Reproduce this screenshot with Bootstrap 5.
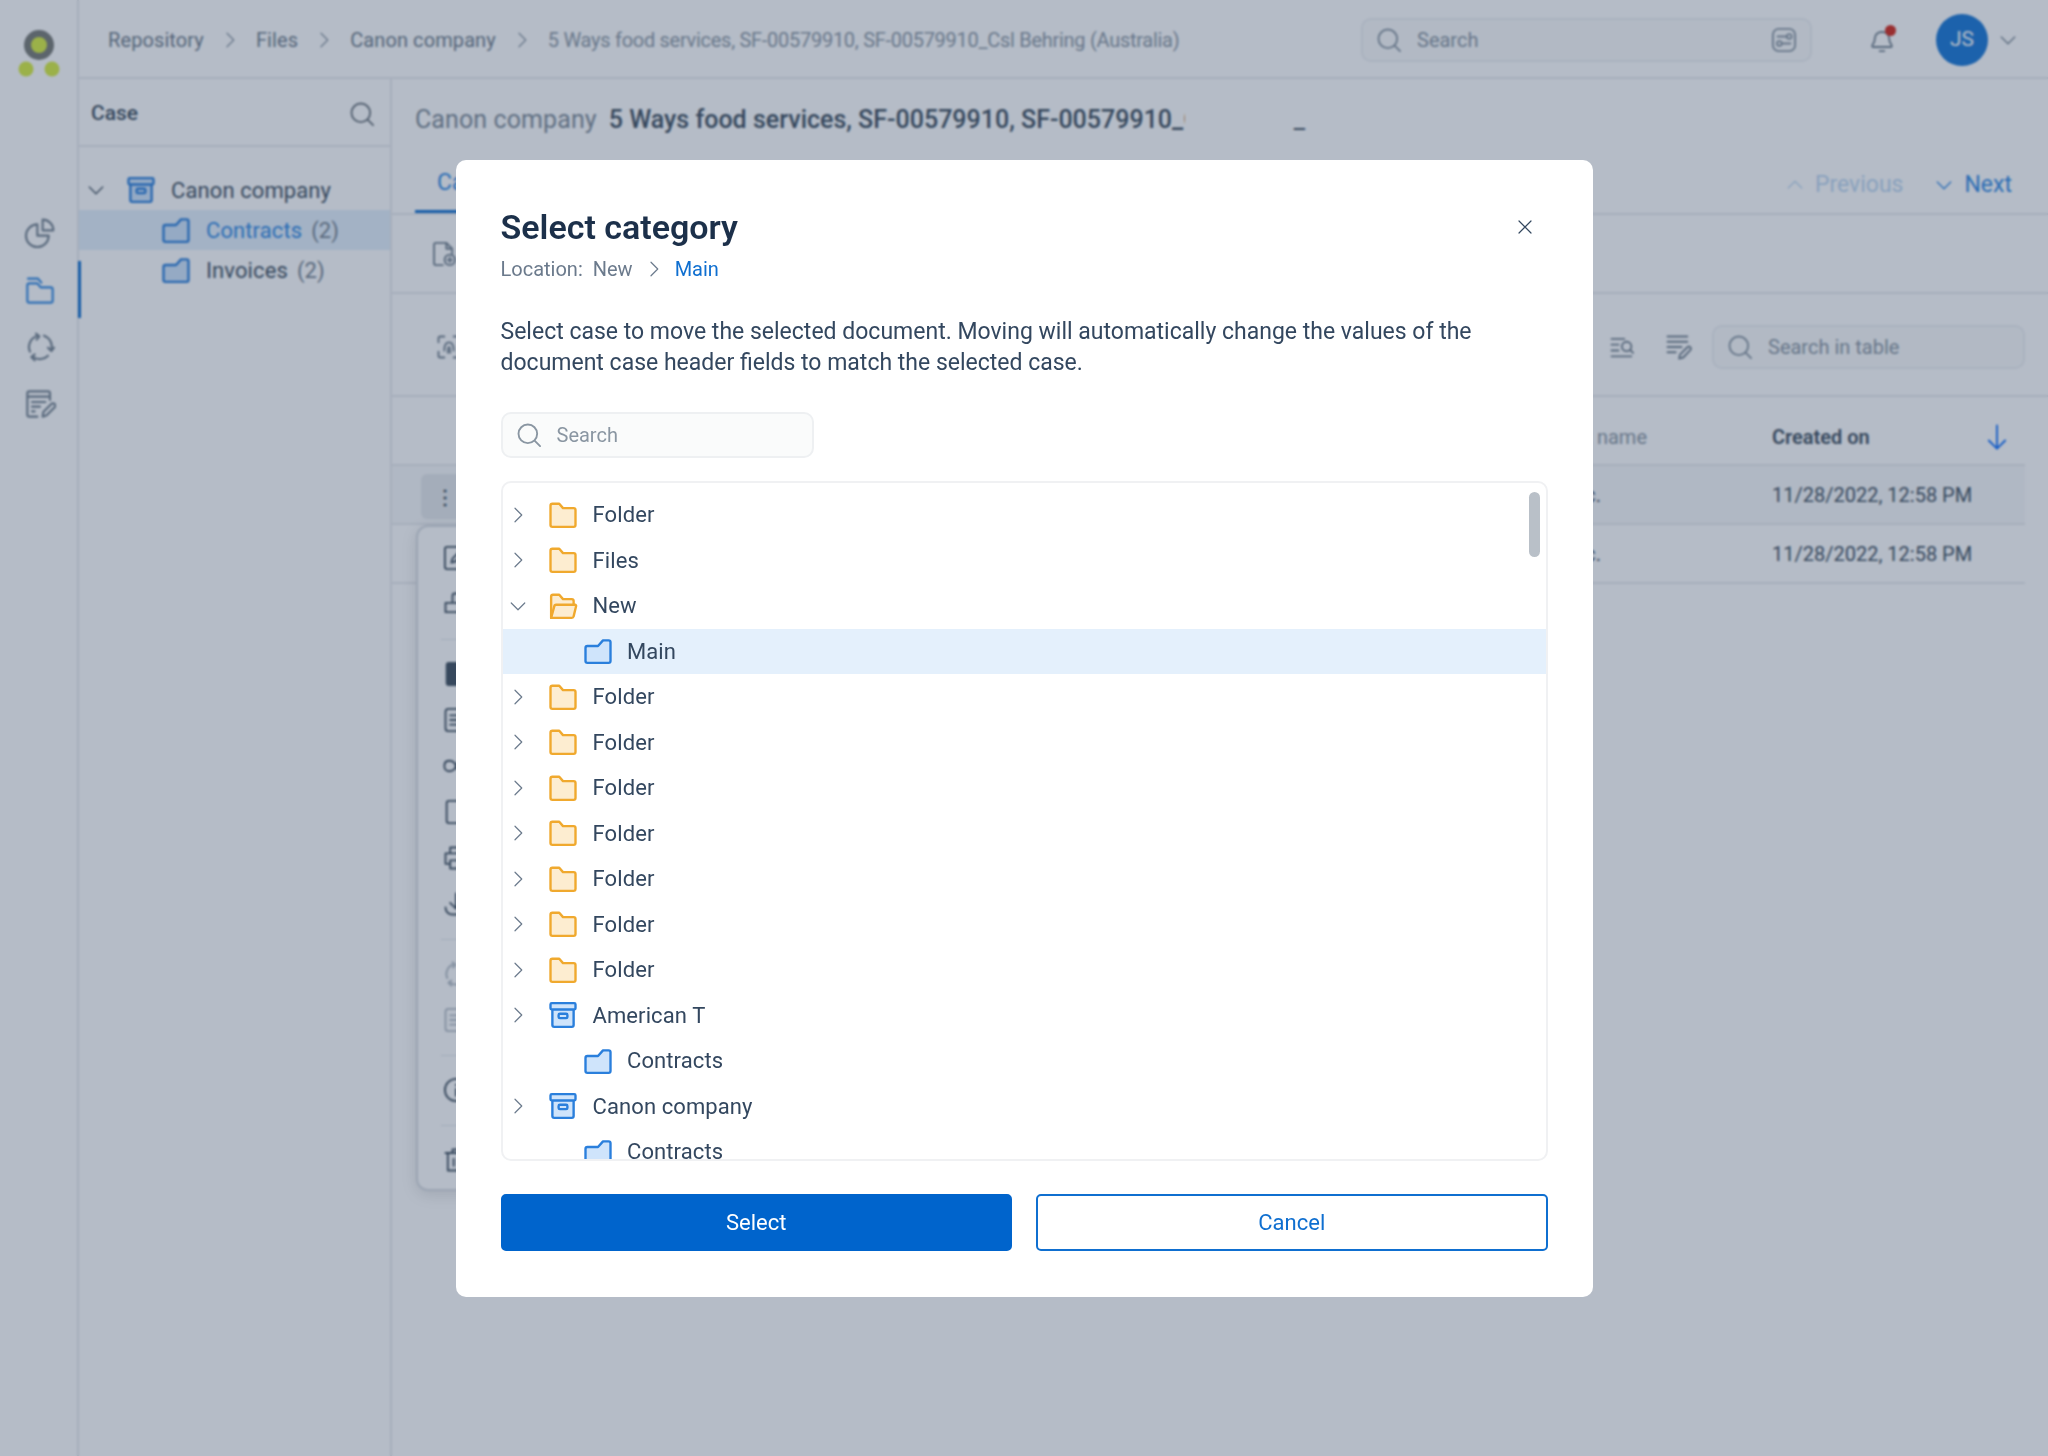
<!DOCTYPE html>
<html lang="en">
<head>
    <meta charset="UTF-8">
    <title>Select category</title>
    <link href="https://cdn.jsdelivr.net/npm/bootstrap@5.3.0/dist/css/bootstrap.min.css" rel="stylesheet">
    <style>
        html, body { height: 100%; overflow: hidden; }
        body { font-family: Roboto, "Liberation Sans", sans-serif; font-size: 20px; color: #40505f; background: #fff; }
        .ico { width: 28px; height: 28px; fill: none; stroke: currentColor; stroke-width: 1.6; stroke-linecap: round; stroke-linejoin: round; flex: none; }
        .ico-sm { width: 18px; height: 18px; }
        .shell { height: 1456px; }
        .rail { width: 79px; flex: none; border-right: 2px solid #e9ebee; color: #74828f; }
        .rail .ico { width: 32px; height: 32px; }
        .rail-logo { height: 79px; padding-top: 27px; }
        .rail-list { margin-top: 125px; }
        .rail-item { height: 57px; width: 79px; position: relative; }
        .rail-item.on { color: #2f88e3; }
        .rail-item.on::after { content: ""; position: absolute; right: -2px; top: 0; bottom: 0; width: 3px; background: #0f6fd0; }
        .page-col { min-width: 0; }
        .topbar { height: 79px; border-bottom: 2px solid #e9ebee; padding: 2px 0 0 29px; }
        .crumbs { font-size: 20px; color: #6f7d8b; gap: 17px; letter-spacing: .1px; }
        .crumbs .ico-sm { color: #8a96a2; }
        .crumbs .faded { color: #8d99a5; letter-spacing: -.28px; }
        .field { background: #fafbfb; border: 2px solid #eef0f2; border-radius: 10px; color: #8a96a2; gap: 14px; }
        .top-field { width: 451px; height: 44px; padding: 0 12px; margin-right: 56px; flex: none; }
        .bell { color: #74828f; position: relative; margin-right: 40px; }
        .bell i { position: absolute; top: -1px; right: 0; width: 11px; height: 11px; border-radius: 50%; background: #d5281a; }
        .avatar { width: 52px; height: 52px; border-radius: 50%; background: #1877d6; color: #fff; font-size: 21px; flex: none; }
        .top-caret { margin: 0 31px 0 11px; color: #74828f; }
        .side { width: 313px; flex: none; border-right: 2px solid #e9ebee; }
        .side-head { height: 68px; border-bottom: 2px solid #e9ebee; padding: 3px 14px 0 12px; font-size: 21px; font-weight: 500; }
        .side-tree { padding-top: 23px; font-size: 22px; letter-spacing: .1px; }
        .side-row { height: 40px; }
        .side-row .ico:not(.ico-sm) { width: 30px; height: 30px; margin-right: 15px; stroke-width: 1.9; }
        .side-row .ico-sm { margin: 0 21px 0 8px; }
        .side-row.leaf { padding-left: 82px; }
        .side-row.on { background: #e4f0fc; color: #2f88e3; }
        .side-row .cnt { color: #74828f; margin-left: 9px; }
        .main-col { min-width: 0; }
        .main-head { height: 68px; padding: 14px 0 0 23px; font-size: 25px; }
        .main-head .co { color: #7e8b97; margin-right: 12px; letter-spacing: .1px; }
        .main-head .doc { width: 576px; overflow: hidden; white-space: nowrap; font-weight: 500; }
        .main-head .tail { margin-left: 109px; }
        .tabs-row { height: 68px; border-bottom: 2px solid #e9ebee; padding: 0 36px 0 23px; font-size: 23px; }
        .tab-on { color: #2f88e3; height: 100%; border-bottom: 3px solid #0f6fd0; width: 100px; padding: 10px 0 0 22px; }
        .pager { color: #2f88e3; padding-top: 10px; gap: 11px; }
        .pager .off { color: #bcd6f0; }
        .pager span.off { margin-right: 21px; }
        .tool-a { height: 79px; border-bottom: 2px solid #e9ebee; padding-left: 38px; color: #74828f; }
        .tool-b { height: 103px; border-bottom: 2px solid #e9ebee; padding: 4px 23px 0 43px; color: #74828f; }
        .tool-list { margin: 0 20px 0 28px; }
        .table-field { width: 313px; height: 44px; padding: 0 12px; flex: none; }
        .grid-head, .grid-row { padding-right: 14px; margin-right: 23px; }
        .grid-head { height: 69px; padding-top: 12px; border-bottom: 2px solid #e9ebee; color: #8a96a2; font-size: 20px; }
        .grid-row { height: 59px; border-bottom: 2px solid #e9ebee; font-size: 20px; }
        .grid-row.on { background: #f8f9fa; }
        .cell-name { width: 1209px; text-align: right; flex: none; }
        .cell-date { margin-left: 171px; width: 211px; flex: none; white-space: nowrap; }
        .grid-head .cell-name { width: 1255px; }
        .grid-head .cell-date { margin-left: 125px; font-weight: 600; color: #40505f; }
        .kebab { position: absolute; left: 421px; top: 474px; width: 60px; height: 45px; background: #e6e9ec; border-radius: 6px; font-weight: 700; padding-left: 14px; }
        .row-menu { position: absolute; left: 416px; top: 525px; width: 300px; height: 666px; background: #fff; border: 2px solid #d8dce1; border-radius: 12px; box-shadow: 0 4px 16px rgba(0,0,0,.12); padding: 13px 0 0 24px; color: #40505f; }
        .row-menu .ico { height: 36px; display: block; }
        .row-menu .ico + .ico { margin-top: 10px; }
        .row-menu hr { margin: 16.5px 0 16.5px -1px; width: 250px; border-color: #e3e6ea; opacity: 1; }
        .row-menu .off { color: #b6bec6; }
        .modal-backdrop.show { background: rgba(39,60,90,.34); opacity: 1; backdrop-filter: blur(1px); }
        .cat-dialog { max-width: 1137px; margin: 160px auto 0; }
        .cat-box { border: 0; border-radius: 10px; padding: 43px 45px 0; height: 1137px; color: #33475f; }
        .cat-title { font-size: 34px; line-height: 48px; font-weight: 600; color: #1c304a; margin: 0; }
        .cat-close { color: #33475f; margin-right: 14px; background: none; border: 0; padding: 0; }
        .cat-path { font-size: 20px; color: #6b7a8c; gap: 10px; margin-top: 3px; line-height: 30px; }
        .cat-path svg { margin: 0 2px; }
        .cat-path a { color: #0f6fd0; text-decoration: none; }
        .cat-text { font-size: 23px; line-height: 31px; margin: 32px 0 0; }
        .cat-search { width: 313px; height: 46px; padding: 0 12px; margin-top: 34px; font-size: 20px; }
        .tree { height: 680px; margin-top: 23px; border: 2px solid #f0f1f3; border-radius: 10px; padding-top: 9px; overflow: hidden; position: relative; font-size: 22px; letter-spacing: .1px; }
        .tree-row { height: 45.5px; padding-left: 6px; }
        .tree-row .ico-sm { color: #6b7a8c; margin-right: 21.5px; }
        .tree-row .ico:not(.ico-sm) { width: 30px; height: 30px; margin-right: 14.5px; stroke-width: 1.9; }
        .tree-row.child { padding-left: 80px; }
        .tree-row.sel { background: #e4f0fc; }
        .ico-y { color: #f0a92e; fill: #fdedd0; }
        .ico-b { color: #2a7fdc; fill: #cfe4fb; }
        .tree-thumb { position: absolute; right: 6px; top: 9px; width: 11px; height: 65px; border-radius: 6px; background: #b9c0c8; }
        .cat-foot { gap: 24px; margin-top: 33px; }
        .cat-foot .btn { flex: 1; height: 57px; font-size: 22px; border-radius: 5px; }
        .btn-pick { background: #0064cc; color: #fff; border: 2px solid #0064cc; }
        .btn-back { background: #fff; color: #0f6fd0; border: 2px solid #0f6fd0; }
    </style>
</head>
<body>

    <!-- icon sprite -->
    <svg width="0" height="0" class="position-absolute">
        <symbol id="i-search" viewBox="0 0 24 24"><circle cx="11" cy="11" r="8"/><path d="M17 17l4.500 4.500"/></symbol>
        <symbol id="i-right" viewBox="0 0 24 24"><path d="M8 3l9 9-9 9"/></symbol>
        <symbol id="i-down" viewBox="0 0 24 24"><path d="M3 8l9 9 9-9"/></symbol>
        <symbol id="i-up" viewBox="0 0 24 24"><path d="M3 16l9-9 9 9"/></symbol>
        <symbol id="i-close" viewBox="0 0 24 24"><path d="M4 4l16 16M20 4L4 20"/></symbol>
        <symbol id="i-folder" viewBox="0 0 24 24"><path d="M2 4.500A1.500 1.500 0 0 1 3.500 3h5.500l3 3.500h8.500A1.500 1.500 0 0 1 22 8v12a1.500 1.500 0 0 1-1.500 1.500h-17A1.500 1.500 0 0 1 2 20z"/></symbol>
        <symbol id="i-open" viewBox="0 0 24 24"><path d="M2.500 21.500V4.500A1.500 1.500 0 0 1 4 3h5l3 3.500h7A1.500 1.500 0 0 1 20.500 8v3"/><path d="M6.500 11h15.200a.8.8 0 0 1 .8 1l-2 8.300a1.500 1.500 0 0 1-1.500 1.200H2.500l2.500-9.200a1.500 1.500 0 0 1 1.500-1.300z"/></symbol>
        <symbol id="i-cat" viewBox="0 0 24 24"><path d="M2 9.500A1.500 1.500 0 0 1 3.500 8H12l4-4.500h4.500A1.500 1.500 0 0 1 22 5v15a1.500 1.500 0 0 1-1.500 1.500h-17A1.500 1.500 0 0 1 2 20z"/></symbol>
        <symbol id="i-box" viewBox="0 0 24 24"><path d="M3.500 7.500h17V20a1.500 1.500 0 0 1-1.500 1.500H5A1.500 1.500 0 0 1 3.500 20z"/><rect x="2" y="2.500" width="20" height="5" rx="1"/><rect x="8.500" y="11" width="7" height="3.500" rx="1"/></symbol>
        <symbol id="i-pie" viewBox="0 0 24 24"><path d="M10 5.500a8.500 8.500 0 1 0 8.500 8.500H10z"/><path d="M14 2v8h8a8 8 0 0 0-8-8z"/></symbol>
        <symbol id="i-folders" viewBox="0 0 24 24"><path d="M2.500 8.500A1.500 1.500 0 0 1 4 7h6l2.500 3H20a1.500 1.500 0 0 1 1.500 1.500V20a1.500 1.500 0 0 1-1.500 1.500H4A1.500 1.500 0 0 1 2.500 20z"/><path d="M3 3.500h7.500L13 6.500"/></symbol>
        <symbol id="i-cycle" viewBox="0 0 24 24"><path d="M4.500 15.500A8.500 8.500 0 0 1 10 3.800M15 3.500a8.500 8.500 0 0 1 5.300 11M18 18.500a8.500 8.500 0 0 1-11 1"/><path d="M9 2l2.500 2-2 2.500M18 12.500l2.500 2.500 2-2.500M8 22l-2.500-2.500L8 17.500"/></symbol>
        <symbol id="i-form" viewBox="0 0 24 24"><path d="M10 21.500H4A1.500 1.500 0 0 1 2.500 20V4A1.500 1.500 0 0 1 4 2.500h14A1.500 1.500 0 0 1 19.500 4v5M2.500 6.500h17M6 10.500h10M6 14h6M6 17.500h2"/><path d="M14 21.500l.5-3.500 6-6a1.500 1.500 0 0 1 2.500 2.500l-6 6z"/></symbol>
        <symbol id="i-tune" viewBox="0 0 24 24"><rect x="2.500" y="2.500" width="19" height="19" rx="5"/><path d="M6.500 9h8M10.500 15h7"/><circle cx="16.500" cy="9" r="2"/><circle cx="8" cy="15" r="2"/></symbol>
        <symbol id="i-bell" viewBox="0 0 24 24"><path d="M4 18c-1.500-1 1-3 1.500-5 .5-3 0-7.500 6.500-8 6.500.5 6 5 6.500 8 .5 2 3 4 1.500 5zM10 21.500h4"/></symbol>
        <symbol id="i-filesearch" viewBox="0 0 24 24"><path d="M3 5h11M3 10h6M3 15h6M3 20h17"/><circle cx="16" cy="11.500" r="4"/><path d="M19 14.500l2.500 2.500"/></symbol>
        <symbol id="i-listedit" viewBox="0 0 24 24"><path d="M3 3h17M3 7.500h17M3 12h12M3 16.500h7"/><path d="M13 22l.7-3.500 6.500-6.500a1.800 1.800 0 0 1 2.500 2.500L16.500 21z"/></symbol>
        <symbol id="i-fileadd" viewBox="0 0 24 24"><path d="M11 21.500H5A1.500 1.500 0 0 1 3.500 20V4A1.500 1.500 0 0 1 5 2.500h9l5 5V12"/><path d="M14 2.500v5h5"/><circle cx="17" cy="17" r="4.500"/><path d="M17 15v4M15 17h4"/></symbol>
        <symbol id="i-scan" viewBox="0 0 24 24"><path d="M3 8V4.500A1.500 1.500 0 0 1 4.500 3H8M16 3h3.500A1.500 1.500 0 0 1 21 4.500V8M21 16v3.500a1.500 1.500 0 0 1-1.500 1.500H16M8 21H4.500A1.500 1.500 0 0 1 3 19.500V16"/><path d="M8 15c0-5 2-7 4-7s4 2 4 7M11 17c0-3 0-5 1-5s1 2 1 5"/></symbol>
        <symbol id="i-arrow" viewBox="0 0 24 24"><path d="M12 2v20M5 15l7 7 7-7"/></symbol>
        <symbol id="i-edit" viewBox="0 0 24 24"><rect x="2.500" y="2.500" width="19" height="19" rx="2"/><path d="M8 16l1-3.500 7-7 2.500 2.500-7 7z"/></symbol>
        <symbol id="i-stamp" viewBox="0 0 24 24"><path d="M9 11V5a2 2 0 0 1 2-2h2a2 2 0 0 1 2 2v6M3 11h18v8H3z"/></symbol>
        <symbol id="i-doc" viewBox="0 0 24 24"><rect x="3" y="2.500" width="18" height="19" rx="2.500"/><path d="M7 8h10M7 12h10M7 16h6"/></symbol>
        <symbol id="i-link" viewBox="0 0 24 24"><path d="M2 12c0-6 8-6 10 0s10 6 10 0-8-6-10 0-10 6-10 0z"/></symbol>
        <symbol id="i-page" viewBox="0 0 24 24"><rect x="4" y="2.500" width="16" height="19" rx="2"/></symbol>
        <symbol id="i-print" viewBox="0 0 24 24"><path d="M7 8V3h10v5M7 17H3V8h18v9h-4"/><rect x="7" y="14" width="10" height="7"/></symbol>
        <symbol id="i-save" viewBox="0 0 24 24"><path d="M3 15c0 4 3 6 6 6h6c3 0 6-2 6-6M12 3v13M7 11l5 5 5-5"/></symbol>
        <symbol id="i-info" viewBox="0 0 24 24"><circle cx="12" cy="12" r="9.500"/><path d="M12 11v6M12 7.500v.5"/></symbol>
        <symbol id="i-trash" viewBox="0 0 24 24"><path d="M3 6h18M9 6V3h6v3M5 6v15h14V6M10 11v6M14 11v6"/></symbol>
    </svg>

    <!-- Page behind the dialog -->
    <div class="shell d-flex">
        <aside class="rail">
            <div class="rail-logo d-flex justify-content-center align-items-start">
                <svg width="44" height="60" viewBox="0 0 44 60">
                    <circle cx="22" cy="18" r="11.500" fill="#d8ee40" stroke="#787b76" stroke-width="7"/>
                    <circle cx="9" cy="42" r="7.500" fill="#d8ee40"/>
                    <circle cx="35" cy="42" r="7.500" fill="#d8ee40"/>
                </svg>
            </div>
            <div class="rail-list">
                <div class="rail-item d-flex justify-content-center align-items-center"><svg class="ico"><use href="#i-pie"/></svg></div>
                <div class="rail-item on d-flex justify-content-center align-items-center"><svg class="ico"><use href="#i-folders"/></svg></div>
                <div class="rail-item d-flex justify-content-center align-items-center"><svg class="ico"><use href="#i-cycle"/></svg></div>
                <div class="rail-item d-flex justify-content-center align-items-center"><svg class="ico"><use href="#i-form"/></svg></div>
            </div>
        </aside>

        <div class="page-col flex-grow-1 d-flex flex-column">
            <header class="topbar d-flex align-items-center">
                <div class="crumbs d-flex align-items-center flex-grow-1">
                    <span>Repository</span><svg class="ico ico-sm"><use href="#i-right"/></svg>
                    <span>Files</span><svg class="ico ico-sm"><use href="#i-right"/></svg>
                    <span>Canon company</span><svg class="ico ico-sm"><use href="#i-right"/></svg>
                    <span class="faded">5 Ways food services, SF-00579910, SF-00579910_Csl Behring (Australia)</span>
                </div>
                <div class="field top-field d-flex align-items-center">
                    <svg class="ico"><use href="#i-search"/></svg>
                    <span class="flex-grow-1">Search</span>
                    <svg class="ico"><use href="#i-tune"/></svg>
                </div>
                <div class="bell"><svg class="ico d-block"><use href="#i-bell"/></svg><i></i></div>
                <div class="avatar d-flex justify-content-center align-items-center">JS</div>
                <svg class="ico ico-sm top-caret"><use href="#i-down"/></svg>
            </header>

            <div class="flex-grow-1 d-flex">
                <section class="side">
                    <div class="side-head d-flex justify-content-between align-items-center">
                        <span>Case</span>
                        <svg class="ico text-secondary"><use href="#i-search"/></svg>
                    </div>
                    <div class="side-tree">
                        <div class="side-row d-flex align-items-center">
                            <svg class="ico ico-sm"><use href="#i-down"/></svg>
                            <svg class="ico ico-b"><use href="#i-box"/></svg>
                            <span>Canon company</span>
                        </div>
                        <div class="side-row leaf on d-flex align-items-center">
                            <svg class="ico ico-b"><use href="#i-cat"/></svg>
                            <span>Contracts</span><span class="cnt">(2)</span>
                        </div>
                        <div class="side-row leaf d-flex align-items-center">
                            <svg class="ico ico-b"><use href="#i-cat"/></svg>
                            <span>Invoices</span><span class="cnt">(2)</span>
                        </div>
                    </div>
                </section>

                <main class="main-col flex-grow-1">
                    <div class="main-head d-flex align-items-center">
                        <span class="co">Canon company</span>
                        <span class="doc">5 Ways food services, SF-00579910, SF-00579910_Csl Behring (Australia)</span>
                        <span class="tail">_</span>
                    </div>
                    <div class="tabs-row d-flex align-items-center justify-content-between">
                        <div class="tab-on d-flex align-items-center">Case</div>
                        <div class="pager d-flex align-items-center">
                            <svg class="ico ico-sm off"><use href="#i-up"/></svg><span class="off">Previous</span>
                            <svg class="ico ico-sm"><use href="#i-down"/></svg><span>Next</span>
                        </div>
                    </div>
                    <div class="tool-a d-flex align-items-center"><svg class="ico"><use href="#i-fileadd"/></svg></div>
                    <div class="tool-b d-flex align-items-center">
                        <svg class="ico"><use href="#i-scan"/></svg>
                        <svg class="ico ms-auto"><use href="#i-filesearch"/></svg>
                        <svg class="ico tool-list"><use href="#i-listedit"/></svg>
                        <div class="field table-field d-flex align-items-center">
                            <svg class="ico"><use href="#i-search"/></svg><span>Search in table</span>
                        </div>
                    </div>
                    <div class="grid-head d-flex align-items-center">
                        <span class="cell-name">Document name</span>
                        <span class="cell-date">Created on</span>
                        <svg class="ico text-primary"><use href="#i-arrow"/></svg>
                    </div>
                    <div class="grid-row on d-flex align-items-center">
                        <span class="cell-name">Csl Behring Inc.</span><span class="cell-date">11/28/2022, 12:58 PM</span>
                    </div>
                    <div class="grid-row d-flex align-items-center">
                        <span class="cell-name">Csl Behring Inc.</span><span class="cell-date">11/28/2022, 12:58 PM</span>
                    </div>
                </main>
            </div>
        </div>
    </div>

    <!-- Row actions menu (open, mostly under the dialog) -->
    <div class="kebab d-flex align-items-center">⋮</div>
    <div class="row-menu">
        <svg class="ico"><use href="#i-edit"/></svg>
        <svg class="ico"><use href="#i-stamp"/></svg>
        <hr>
        <svg class="ico" style="fill:#40505f"><use href="#i-page"/></svg>
        <svg class="ico"><use href="#i-doc"/></svg>
        <svg class="ico"><use href="#i-link"/></svg>
        <svg class="ico"><use href="#i-page"/></svg>
        <svg class="ico"><use href="#i-print"/></svg>
        <svg class="ico"><use href="#i-save"/></svg>
        <hr>
        <svg class="ico off"><use href="#i-cycle"/></svg>
        <svg class="ico off"><use href="#i-doc"/></svg>
        <hr>
        <svg class="ico"><use href="#i-info"/></svg>
        <hr>
        <svg class="ico"><use href="#i-trash"/></svg>
    </div>

    <div class="modal-backdrop show"></div>

    <!-- Select category dialog -->
    <div class="modal d-block" tabindex="-1">
        <div class="modal-dialog cat-dialog">
            <div class="modal-content cat-box">
                <div class="d-flex justify-content-between align-items-center">
                    <h2 class="cat-title">Select category</h2>
                    <button type="button" class="cat-close d-flex" aria-label="Close"><svg class="ico ico-sm"><use href="#i-close"/></svg></button>
                </div>
                <div class="cat-path d-flex align-items-center">
                    <span>Location:</span><span>New</span>
                    <svg class="ico ico-sm"><use href="#i-right"/></svg>
                    <a href="#">Main</a>
                </div>
                <p class="cat-text">Select case to move the selected document. Moving will automatically change the values of the<br>document case header fields to match the selected case.</p>

                <div class="field cat-search d-flex align-items-center">
                    <svg class="ico"><use href="#i-search"/></svg><span>Search</span>
                </div>

                <div class="tree">
                    <div class="tree-row d-flex align-items-center"><svg class="ico ico-sm"><use href="#i-right"/></svg><svg class="ico ico-y"><use href="#i-folder"/></svg>Folder</div>
                    <div class="tree-row d-flex align-items-center"><svg class="ico ico-sm"><use href="#i-right"/></svg><svg class="ico ico-y"><use href="#i-folder"/></svg>Files</div>
                    <div class="tree-row d-flex align-items-center"><svg class="ico ico-sm"><use href="#i-down"/></svg><svg class="ico ico-y"><use href="#i-open"/></svg>New</div>
                    <div class="tree-row child sel d-flex align-items-center"><svg class="ico ico-b"><use href="#i-cat"/></svg>Main</div>
                    <div class="tree-row d-flex align-items-center"><svg class="ico ico-sm"><use href="#i-right"/></svg><svg class="ico ico-y"><use href="#i-folder"/></svg>Folder</div>
                    <div class="tree-row d-flex align-items-center"><svg class="ico ico-sm"><use href="#i-right"/></svg><svg class="ico ico-y"><use href="#i-folder"/></svg>Folder</div>
                    <div class="tree-row d-flex align-items-center"><svg class="ico ico-sm"><use href="#i-right"/></svg><svg class="ico ico-y"><use href="#i-folder"/></svg>Folder</div>
                    <div class="tree-row d-flex align-items-center"><svg class="ico ico-sm"><use href="#i-right"/></svg><svg class="ico ico-y"><use href="#i-folder"/></svg>Folder</div>
                    <div class="tree-row d-flex align-items-center"><svg class="ico ico-sm"><use href="#i-right"/></svg><svg class="ico ico-y"><use href="#i-folder"/></svg>Folder</div>
                    <div class="tree-row d-flex align-items-center"><svg class="ico ico-sm"><use href="#i-right"/></svg><svg class="ico ico-y"><use href="#i-folder"/></svg>Folder</div>
                    <div class="tree-row d-flex align-items-center"><svg class="ico ico-sm"><use href="#i-right"/></svg><svg class="ico ico-y"><use href="#i-folder"/></svg>Folder</div>
                    <div class="tree-row d-flex align-items-center"><svg class="ico ico-sm"><use href="#i-right"/></svg><svg class="ico ico-b"><use href="#i-box"/></svg>American T</div>
                    <div class="tree-row child d-flex align-items-center"><svg class="ico ico-b"><use href="#i-cat"/></svg>Contracts</div>
                    <div class="tree-row d-flex align-items-center"><svg class="ico ico-sm"><use href="#i-right"/></svg><svg class="ico ico-b"><use href="#i-box"/></svg>Canon company</div>
                    <div class="tree-row child d-flex align-items-center"><svg class="ico ico-b"><use href="#i-cat"/></svg>Contracts</div>
                    <div class="tree-thumb"></div>
                </div>

                <div class="cat-foot d-flex">
                    <button type="button" class="btn btn-pick">Select</button>
                    <button type="button" class="btn btn-back">Cancel</button>
                </div>
            </div>
        </div>
    </div>

    <script src="https://cdn.jsdelivr.net/npm/bootstrap@5.3.0/dist/js/bootstrap.bundle.min.js"></script>
</body>
</html>
